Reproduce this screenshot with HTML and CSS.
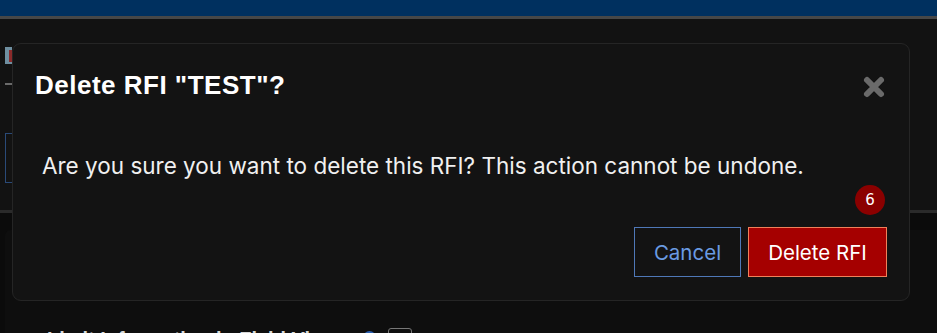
FILE: index.html
```html
<!DOCTYPE html>
<html>
<head>
<meta charset="utf-8">
<link rel="stylesheet" href="styles.css">
</head>
<body>
<div class="topbar"></div>
<div class="page">
  <div class="upper">
    <div class="side-icon"><span class="icon-red"></span></div>
    <div class="side-dash"></div>
    <div class="side-box"></div>
  </div>
  <div class="divider"></div>
  <div class="lower">
    <div class="card">
      <div class="card-title">Limit Information in Field View <span class="help-dot"></span><span class="check"></span></div>
    </div>
  </div>
</div>

<div class="modal" role="dialog">
  <div class="modal-header">
    <h2 class="modal-title">Delete RFI "TEST"?</h2>
    <button class="close" aria-label="Close">
      <svg width="24" height="24" viewBox="0 0 24 24"><path d="M5 5 L19 19 M19 5 L5 19" stroke="#6a6a6a" stroke-width="6" stroke-linecap="round"/></svg>
    </button>
  </div>
  <p class="modal-body">Are you sure you want to delete this RFI? This action cannot be undone.</p>
  <div class="badge-row"><span class="badge">6</span></div>
  <div class="modal-footer">
    <button class="btn btn-cancel">Cancel</button>
    <button class="btn btn-danger">Delete RFI</button>
  </div>
</div>
</body>
</html>
```
FILE: styles.css
```css
html, body {
  margin: 0;
  padding: 0;
}
body {
  background: #0b0b0b;
  width: 937px;
  height: 333px;
  overflow: hidden;
  position: relative;
  font-family: Inter, "Liberation Sans", sans-serif;
}
.topbar {
  height: 16px;
  background: #00305f;
  border-bottom: 3px solid #474747;
}
.page {
  display: flex;
  flex-direction: column;
}
.upper {
  height: 191px;
  background: #121212;
  padding-left: 5px;
  display: flex;
  flex-direction: column;
  box-sizing: border-box;
  padding-top: 28px;
}
.side-icon {
  width: 7px;
  height: 17px;
  background: #6f8fa0;
}
.icon-red {
  display: block;
  width: 3px;
  height: 12px;
  margin: 3px 0 0 4px;
  background: #8a2a2a;
}
.side-dash {
  width: 8px;
  height: 2px;
  background: #6a6a6a;
  margin-top: 19px;
}
.side-box {
  width: 20px;
  height: 50px;
  border: 1px solid #2a4a78;
  margin-top: 48px;
  box-sizing: border-box;
}
.divider {
  height: 3px;
  background: #2a2a2a;
}
.lower {
  background: #0b0b0b;
  flex: 1;
}
.card {
  background: #0e0e0e;
  margin: 17px 0 0 5px;
  border-radius: 6px 0 0 0;
  height: 120px;
  padding: 98px 0 0 42px;
  box-sizing: border-box;
}
.card-title {
  color: #d8d8d8;
  font-weight: 700;
  font-size: 20px;
  font-family: "Liberation Sans", sans-serif;
  display: flex;
  align-items: flex-start;
  gap: 12px;
}
.help-dot {
  width: 13px;
  height: 13px;
  border-radius: 50%;
  background: #2a5fb0;
  margin-left: 14px;
  margin-top: 3px;
}
.check {
  width: 22px;
  height: 22px;
  border: 1px solid #777;
  border-radius: 3px;
}

.modal {
  position: absolute;
  left: 12px;
  top: 43px;
  width: 898px;
  height: 258px;
  box-sizing: border-box;
  background: #131313;
  border: 1px solid #252525;
  border-radius: 9px;
  display: flex;
  flex-direction: column;
}
.modal-header {
  display: flex;
  justify-content: space-between;
  align-items: center;
  padding: 20px 22px 0 22px;
  height: 42px;
}
.modal-title {
  margin: 0;
  font-family: "Liberation Sans", Arial, sans-serif;
  font-weight: 700;
  font-size: 26px;
  letter-spacing: 0.5px;
  color: #ffffff;
}
.close {
  background: none;
  border: 0;
  padding: 0;
  width: 24px;
  height: 24px;
  margin-right: 1px;
  margin-top: 4px;
  cursor: pointer;
}
.close svg { display: block; }
.modal-body {
  margin: 47px 0 0 29px;
  font-size: 22.5px;
  color: #f0f0f0;
  line-height: 26px;
}
.badge-row {
  display: flex;
  justify-content: flex-end;
  padding-right: 24px;
  margin-top: 6px;
}
.badge {
  width: 30px;
  height: 30px;
  border-radius: 50%;
  background: #8b0000;
  color: #fff;
  font-family: "DejaVu Sans", sans-serif;
  font-size: 15px;
  display: flex;
  align-items: center;
  justify-content: center;
}
.modal-footer {
  display: flex;
  justify-content: flex-end;
  gap: 7px;
  padding-right: 22px;
  margin-top: 12px;
}
.btn {
  height: 50px;
  box-sizing: border-box;
  font-family: Inter, sans-serif;
  font-size: 20.5px;
  padding: 0;
  border-radius: 0;
  cursor: pointer;
}
.btn-cancel {
  width: 107px;
  background: transparent;
  border: 1px solid #4f78b8;
  color: #6a9be3;
}
.btn-danger {
  width: 139px;
  background: #a50000;
  border: 1px solid #f0805a;
  color: #ffffff;
}
```
